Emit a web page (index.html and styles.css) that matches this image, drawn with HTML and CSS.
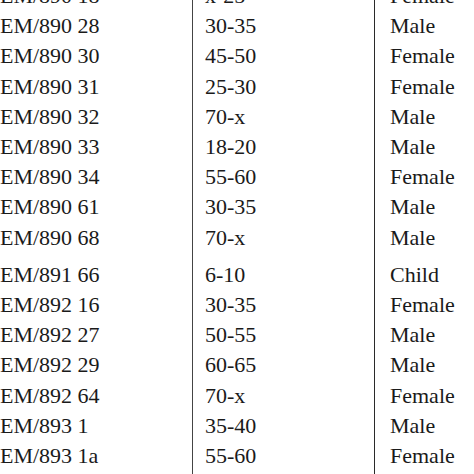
FILE: index.html
```html
<!DOCTYPE html>
<html>
<head>
<meta charset="utf-8">
<link rel="stylesheet" href="styles.css">
</head>
<body>
<div class="table">
  <div class="row"><div class="c1">EM/890 18</div><div class="c2">x-25</div><div class="c3">Female</div></div>
  <div class="row"><div class="c1">EM/890 28</div><div class="c2">30-35</div><div class="c3">Male</div></div>
  <div class="row"><div class="c1">EM/890 30</div><div class="c2">45-50</div><div class="c3">Female</div></div>
  <div class="row"><div class="c1">EM/890 31</div><div class="c2">25-30</div><div class="c3">Female</div></div>
  <div class="row"><div class="c1">EM/890 32</div><div class="c2">70-x</div><div class="c3">Male</div></div>
  <div class="row"><div class="c1">EM/890 33</div><div class="c2">18-20</div><div class="c3">Male</div></div>
  <div class="row"><div class="c1">EM/890 34</div><div class="c2">55-60</div><div class="c3">Female</div></div>
  <div class="row"><div class="c1">EM/890 61</div><div class="c2">30-35</div><div class="c3">Male</div></div>
  <div class="row"><div class="c1">EM/890 68</div><div class="c2">70-x</div><div class="c3">Male</div></div>
  <div class="row gap"><div class="c1">EM/891 66</div><div class="c2">6-10</div><div class="c3">Child</div></div>
  <div class="row"><div class="c1">EM/892 16</div><div class="c2">30-35</div><div class="c3">Female</div></div>
  <div class="row"><div class="c1">EM/892 27</div><div class="c2">50-55</div><div class="c3">Male</div></div>
  <div class="row"><div class="c1">EM/892 29</div><div class="c2">60-65</div><div class="c3">Male</div></div>
  <div class="row"><div class="c1">EM/892 64</div><div class="c2">70-x</div><div class="c3">Female</div></div>
  <div class="row"><div class="c1">EM/893 1</div><div class="c2">35-40</div><div class="c3">Male</div></div>
  <div class="row"><div class="c1">EM/893 1a</div><div class="c2">55-60</div><div class="c3">Female</div></div>
  <div class="row"><div class="c1">&nbsp;</div><div class="c2">&nbsp;</div><div class="c3">&nbsp;</div></div>
</div>
</body>
</html>
```
FILE: styles.css
```css
html, body {
  margin: 0;
  padding: 0;
  background: #ffffff;
  overflow: hidden;
}
.table {
  margin-top: -19px;
  font-family: "Liberation Serif", "Times New Roman", serif;
  font-size: 22px;
  line-height: 30.2px;
  color: #1a1a1a;
}
.row {
  display: grid;
  grid-template-columns: 192px 182px 1fr;
}
.c1 {
  padding-left: 0;
  white-space: nowrap;
}
.c2 {
  border-left: 1.5px solid #444444;
  padding-left: 12px;
}
.c3 {
  border-left: 1.5px solid #2a2a2a;
  padding-left: 15px;
}
.gap > div {
  padding-top: 7px;
}
```
